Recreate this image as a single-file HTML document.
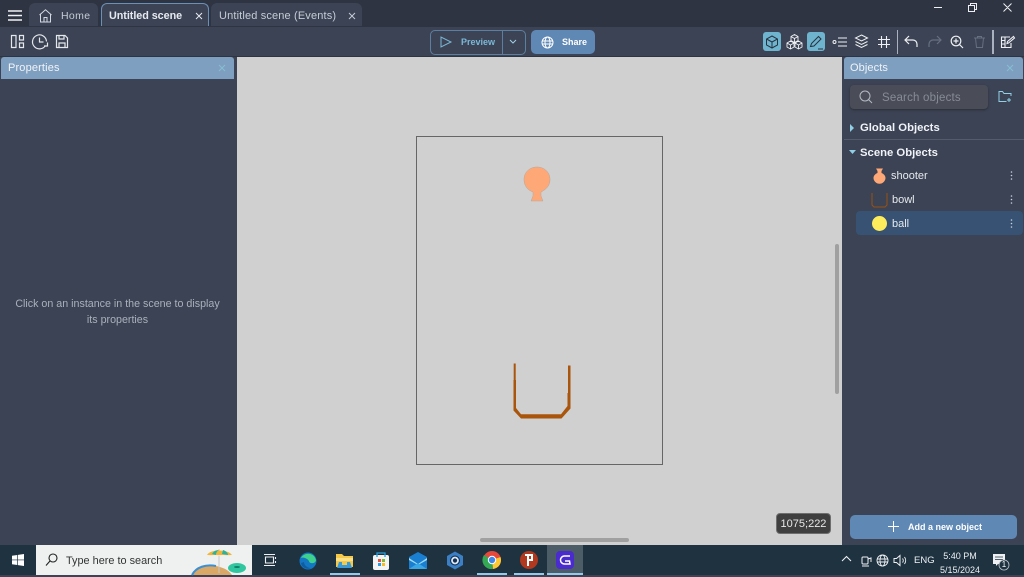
<!DOCTYPE html>
<html><head><meta charset="utf-8"><style>
html,body{margin:0;padding:0}
body{width:1024px;height:575px;overflow:hidden;position:relative;background:#3c4354;font-family:"Liberation Sans",sans-serif;color:#fff}
.a{position:absolute}
.t{position:absolute;white-space:nowrap;line-height:14px}
svg{position:absolute;overflow:visible}
.tab{position:absolute;top:3px;height:23px;background:#3c4354;border-radius:6px 6px 0 0;box-sizing:border-box}
.hd{position:absolute;top:57px;height:22px;background:#7f9fc0;border-radius:3px 3px 0 0}
</style></head><body>
<div class="a" style="left:0;top:0;width:1024px;height:27px;background:#2e3441"></div>
<svg style="left:0;top:0" width="30" height="27" fill="none" stroke="#f0f2f5" stroke-width="1.500"><path d="M8 11h14M8 15.500h14M8 20h14"/></svg>
<div class="tab" style="left:29px;width:69px"></div>
<svg style="left:39px;top:9px" width="14" height="14" fill="none" stroke="#d5dae2" stroke-width="1"><path d="M.5 6L6.500 .8 12.500 6M1.500 5.500V13h10V5.500M5 13V8.500h3V13"/></svg>
<div class="t" style="left:61px;top:9px;font-size:10.500px;color:#c6ccd6;letter-spacing:.35px">Home</div>
<div class="tab" style="left:101px;width:108px;border:1px solid #6b90b8;border-bottom:0"></div>
<div class="t" style="left:109px;top:9px;font-size:10.800px;font-weight:bold;color:#e6eaf0;letter-spacing:-.05px">Untitled scene</div>
<svg style="left:195px;top:12px" width="9" height="9" stroke="#e6eaf0" stroke-width="1"><path d="M1 1l6 6M7 1l-6 6"/></svg>
<div class="tab" style="left:211px;width:151px"></div>
<div class="t" style="left:219px;top:9px;font-size:11px;color:#c6ccd6;letter-spacing:.15px">Untitled scene (Events)</div>
<svg style="left:348px;top:12px" width="9" height="9" stroke="#c6ccd6" stroke-width="1"><path d="M1 1l6 6M7 1l-6 6"/></svg>

<svg style="left:934px;top:0" width="85" height="15" fill="none" stroke="#eef0f3" stroke-width="1"><path d="M0 7.500h8M34.500 5.500h6v6h-6zM36.500 5.500v-2h6v6h-2M69.500 3.500l8 8M77.500 3.500l-8 8"/></svg>

<svg style="left:10px;top:34px" width="60" height="16" fill="none" stroke="#e4e7ec" stroke-width="1.200"><path d="M1.500 1.500h4.500v12H1.500zM9.500 1.500h4v4.500h-4zM9.500 9h4v4.500h-4z"/><path d="M35.500 11.500A7 7 0 1 1 36.500 7.500M29.500 3.500v4.500h4M37.500 8.500v3.500h-3.500"/><path d="M46.500 1.500h8.500l2.500 2.500v9.500h-11zM49 1.500v3.500h5V1.500M49 13.500V9h6v4.500"/></svg>

<div class="a" style="left:430px;top:30px;width:94px;height:22.500px;border:1px solid #5d7f9f;border-radius:5px"></div>
<div class="a" style="left:502px;top:30px;width:1px;height:24px;background:#5d7f9f"></div>
<svg style="left:440px;top:36px" width="13" height="12" fill="none" stroke="#7cb8d8" stroke-width="1"><path d="M1 1v10l10-5z"/></svg>
<div class="t" style="left:461px;top:35px;font-size:9px;font-weight:bold;color:#7cb8d8">Preview</div>
<svg style="left:509px;top:39px" width="9" height="6" fill="none" stroke="#9fd0e6" stroke-width="1"><path d="M1 1l3 3 3-3"/></svg>
<div class="a" style="left:531px;top:30px;width:64px;height:24px;background:#5f88b5;border-radius:5px"></div>
<svg style="left:541px;top:36px" width="13" height="13" fill="none" stroke="#fff" stroke-width="1"><circle cx="6.500" cy="6.500" r="5.500"/><ellipse cx="6.500" cy="6.500" rx="2.500" ry="5.500"/><path d="M1 5h11M1 8h11"/></svg>
<div class="t" style="left:562px;top:35px;font-size:9px;font-weight:bold;color:#fff">Share</div>

<div class="a" style="left:763px;top:32px;width:18px;height:19px;background:#6fb4cf;border-radius:3px"></div>
<svg style="left:765px;top:35px" width="14" height="14" fill="none" stroke="#27323f" stroke-width="1"><path d="M7 1l5.500 3v6L7 13l-5.500-3V4zM1.500 4L7 7l5.500-3M7 7v6"/></svg>
<svg style="left:786px;top:34px" width="17" height="16" fill="none" stroke="#eef0f3" stroke-width=".9"><path d="M8.500 .5l3.500 2v4l-3.500 2-3.500-2v-4zM5 2.500l3.500 2 3.500-2M8.500 4.500v4M4.500 7l3.500 2v4l-3.500 2-3.500-2V9zM1 9l3.500 2L8 9M4.500 11v4M12.500 7L16 9v4l-3.500 2L9 13V9zM9 9l3.500 2L16 9M12.500 11v4"/></svg>
<div class="a" style="left:807px;top:32px;width:18px;height:19px;background:#6fb4cf;border-radius:3px"></div>
<svg style="left:809px;top:35px" width="15" height="15" fill="none" stroke="#27323f" stroke-width="1"><path d="M1.500 11.500l1-3L9.500 1.500l2.500 2.500-7 7zM9 14h5"/></svg>
<svg style="left:832px;top:36px" width="16" height="13" fill="none" stroke="#eef0f3" stroke-width="1"><circle cx="2.500" cy="6" r="1.500"/><path d="M6 2h9M6 6h9M6 10h9"/></svg>
<svg style="left:854px;top:34px" width="15" height="15" fill="none" stroke="#eef0f3" stroke-width="1"><path d="M7.500 1l6 3-6 3-6-3zM1.500 7.500l6 3 6-3M1.500 10.500l6 3 6-3"/></svg>
<svg style="left:877px;top:35px" width="14" height="14" fill="none" stroke="#eef0f3" stroke-width="1.100"><path d="M4.500 1v12M9.500 1v12M1 4.500h12M1 9.500h12"/></svg>
<div class="a" style="left:897px;top:30px;width:1px;height:24px;background:#aab2bf"></div>
<svg style="left:904px;top:35px" width="15" height="13" fill="none" stroke="#eef0f3" stroke-width="1.200"><path d="M5 1L1 5l4 4M1 5h8a4 4 0 0 1 4 4v3"/></svg>
<svg style="left:927px;top:35px" width="15" height="13" fill="none" stroke="#667080" stroke-width="1.200"><path d="M10 1l4 4-4 4M14 5H6a4 4 0 0 0-4 4v3"/></svg>
<svg style="left:950px;top:35px" width="14" height="14" fill="none" stroke="#eef0f3" stroke-width="1.200"><circle cx="6" cy="6" r="4.800"/><path d="M9.500 9.500l3.500 3.500M6 3.500v5M3.500 6h5"/></svg>
<svg style="left:973px;top:35px" width="13" height="14" fill="none" stroke="#667080" stroke-width="1"><path d="M1 3h11M4.500 3V1.500h4V3M2.500 3l1 9.500h6l1-9.500"/></svg>
<div class="a" style="left:992px;top:30px;width:2px;height:24px;background:#aab2bf"></div>
<svg style="left:1000px;top:35px" width="16" height="14" fill="none" stroke="#eef0f3" stroke-width="1.100"><path d="M10 2H1.500v10.500H11V8M5 2v10.500M1.500 5.500H5M1.500 9H5M7 8.500l.5-2 6-5 1 1.500-6 5z"/></svg>

<div class="a" style="left:0;top:56px;width:1024px;height:1px;background:#2e3441"></div>
<div class="hd" style="left:1px;width:233px"></div>
<div class="t" style="left:8px;top:61px;font-size:11px;color:#f0f3f7;letter-spacing:.15px">Properties</div>
<svg style="left:218px;top:64px" width="9" height="9" stroke="#86bed2" stroke-width="1"><path d="M1 1l6 6M7 1l-6 6"/></svg>
<div class="t" style="left:0;top:296px;width:235px;text-align:center;font-size:10.700px;line-height:16px;color:#aab0bb;white-space:normal">Click on an instance in the scene to display<br>its properties</div>

<div class="a" style="left:237px;top:57px;width:605px;height:488px;background:#d0d0d0"></div>
<div class="a" style="left:416px;top:136px;width:247px;height:329px;border:1px solid #666;box-sizing:border-box"></div>
<svg style="left:500px;top:155px" width="80" height="60"><path d="M33 37C27 35 24 30 24 24.500 24 17 30 12 37 12 44 12 50 17 50 24.500 50 30 47 34 41 37V41L43 46H31L33 41Z" fill="#fea878" stroke="#b3a79f" stroke-width=".5"/></svg>
<svg style="left:500px;top:355px" width="80" height="70"><path d="M13.700 8.500H15.700V25H16V53L21 59.300H61L67.500 51V38H68V10.500H70.500V53.500L61.500 63.500H21L13.500 55.500V25H13.700Z" fill="#a9550b"/></svg>
<div class="a" style="left:776px;top:513px;width:55px;height:21px;background:#3f3f3f;border:1px solid #6e6e6e;border-radius:4px;box-sizing:border-box"></div>
<div class="t" style="left:776px;top:517px;width:55px;text-align:center;font-size:11px;color:#e8e8e8">1075;222</div>
<div class="a" style="left:835px;top:244px;width:4px;height:150px;background:#a0a0a0;border-radius:2px"></div>
<div class="a" style="left:480px;top:538px;width:149px;height:4px;background:#a0a0a0;border-radius:2px"></div>

<div class="hd" style="left:844px;width:179px"></div>
<div class="t" style="left:850px;top:61px;font-size:11px;color:#f0f3f7;letter-spacing:.1px">Objects</div>
<svg style="left:1006px;top:64px" width="9" height="9" stroke="#86bed2" stroke-width="1"><path d="M1 1l6 6M7 1l-6 6"/></svg>
<div class="a" style="left:850px;top:85px;width:138px;height:24px;background:#4a4d57;border-radius:4px;box-shadow:0 1px 2px #2a2e38"></div>
<svg style="left:859px;top:90px" width="14" height="14" fill="none" stroke="#b4b9c2" stroke-width="1"><circle cx="6" cy="6" r="5"/><path d="M9.500 9.500l3.500 3.500"/></svg>
<div class="t" style="left:882px;top:91px;font-size:11.500px;color:#868b96;letter-spacing:.2px">Search objects</div>
<svg style="left:998px;top:90px" width="15" height="13" fill="none" stroke="#8fd0e6" stroke-width="1"><path d="M13 6V3.500H6L4.500 1.500H1v10h7.500M11 8v4M9 10h4"/></svg>
<svg style="left:850px;top:124px" width="5" height="8"><path d="M0 0l4 4-4 4z" fill="#8fd0e6"/></svg>
<div class="t" style="left:860px;top:121px;font-size:11.300px;font-weight:bold;color:#f0f3f7">Global Objects</div>
<div class="a" style="left:844px;top:139px;width:180px;height:1px;background:#545b6b"></div>
<svg style="left:849px;top:150px" width="8" height="5"><path d="M0 0h7l-3.500 4z" fill="#8fd0e6"/></svg>
<div class="t" style="left:860px;top:146px;font-size:11.300px;font-weight:bold;color:#f0f3f7">Scene Objects</div>
<svg style="left:873px;top:168px" width="13" height="16"><path d="M3 .5h7L8.500 3 8.500 5C11 6 12.500 8 12.500 10c0 3-2.800 5.800-6 5.800S.5 13 .5 10c0-2 1.500-4 4-5L4.500 3z" fill="#fea878"/></svg>
<div class="t" style="left:891px;top:169px;font-size:11px;color:#e6e9ee">shooter</div>
<svg style="left:871px;top:192px" width="17" height="16" fill="none" stroke="#9a5014" stroke-width="1"><path d="M1 1v12l2 2h11l2-2V1"/></svg>
<div class="t" style="left:892px;top:193px;font-size:11px;color:#e6e9ee">bowl</div>
<div class="a" style="left:856px;top:211px;width:167px;height:24px;background:#375273;border-radius:4px"></div>
<div class="a" style="left:872px;top:216px;width:15px;height:15px;background:#fdec5c;border-radius:50%"></div>
<div class="t" style="left:892px;top:217px;font-size:11px;color:#e6e9ee">ball</div>
<svg style="left:1010px;top:171px" width="3" height="60" fill="#c8d0da"><circle cx="1.500" cy="1" r=".8"/><circle cx="1.500" cy="4.500" r=".8"/><circle cx="1.500" cy="8" r=".8"/><circle cx="1.500" cy="25" r=".8"/><circle cx="1.500" cy="28.500" r=".8"/><circle cx="1.500" cy="32" r=".8"/><circle cx="1.500" cy="49" r=".8"/><circle cx="1.500" cy="52.500" r=".8"/><circle cx="1.500" cy="56" r=".8"/></svg>
<div class="a" style="left:850px;top:515px;width:167px;height:24px;background:#5f88b5;border-radius:5px"></div>
<svg style="left:888px;top:521px" width="11" height="11" stroke="#fff" stroke-width="1"><path d="M5.500 0v11M0 5.500h11"/></svg>
<div class="t" style="left:908px;top:520px;font-size:9px;font-weight:bold;color:#fff">Add a new object</div>

<div class="a" style="left:0;top:545px;width:1024px;height:30px;background:#1e3240"></div>
<svg style="left:12px;top:554px" width="12" height="12" fill="#fff"><path d="M0 1.700L5.300 1v4.600H0zM6 .9L12 0v5.600H6zM0 6.300h5.300v4.700L0 10.300zM6 6.300h6V12l-6-.9z"/></svg>
<div class="a" style="left:36px;top:545px;width:216px;height:30px;background:#eff1f1"></div>
<svg style="left:45px;top:553px" width="13" height="14" fill="none" stroke="#222" stroke-width="1.100"><circle cx="8" cy="5" r="4"/><path d="M5 8l-4 4.500"/></svg>
<div class="t" style="left:66px;top:554px;font-size:10.900px;color:#333">Type here to search</div>
<svg style="left:192px;top:545px" width="60" height="30"><path d="M0 30C4 22 14 19 24 21 34 23 38 27 40 30z" fill="#d9a766"/><path d="M0 30C4 22 14 19 24 21" fill="none" stroke="#3c8fd0" stroke-width="2"/><path d="M27 4v24" stroke="#c8c8c8" stroke-width="1"/><path d="M15 10C18 4 36 4 40 10z" fill="#f2b632"/><path d="M20 9C22 6 24 5 27 5 25 6 24 8 24 10zM31 5C34 6 36 8 36 10L30 9z" fill="#2bb39a"/><path d="M15 10l4 1 4-1 4 1 4-1 4 1 5-1v0H15z" fill="#e8e0f0"/><ellipse cx="45" cy="23" rx="9" ry="5" fill="#2fc6a0"/><ellipse cx="45" cy="22" rx="3" ry="1" fill="#0f7f6a"/></svg>
<svg style="left:263px;top:553px" width="14" height="14" fill="none" stroke="#eef0f3" stroke-width="1.100"><path d="M2.500 4h8v6h-8zM1 1.500h11M1 12.500h11M12.500 4v2M12.500 8v2"/></svg>
<svg style="left:299px;top:552px" width="18" height="18"><circle cx="9" cy="9" r="8.500" fill="#1377c4"/><path d="M2 6C5 0 15 0 17 8 17 12 10 12 10 9 8 6 4 5 2 6z" fill="#3fd08d"/><path d="M5 10c0 3 3 6 7 6-4 2-9 0-10-5z" fill="#0f5da0"/></svg>
<svg style="left:336px;top:553px" width="17" height="15"><path d="M0 1h6l2 2h9v11H0z" fill="#f7c948"/><path d="M0 5h17v3H0z" fill="#fbe08a"/><path d="M3 9h11l2 6H1z" fill="#3a9ad9"/><path d="M6 9h5v3H6z" fill="#f7c948"/></svg>
<div class="a" style="left:330px;top:573px;width:30px;height:2px;background:#93c9ea"></div>
<svg style="left:372px;top:551px" width="18" height="19"><rect x="1" y="4" width="16" height="15" rx="2" fill="#f4f4f4"/><path d="M5 6V2h8v4" fill="none" stroke="#2b9fd9" stroke-width="1.300"/><rect x="6" y="8" width="3" height="3" fill="#e8543a"/><rect x="10" y="8" width="3" height="3" fill="#7fba3c"/><rect x="6" y="12" width="3" height="3" fill="#2d9be0"/><rect x="10" y="12" width="3" height="3" fill="#fbbb1c"/></svg>
<svg style="left:409px;top:552px" width="18" height="17"><path d="M0 5L9 0l9 5v12H0z" fill="#1a7fd0"/><path d="M0 6l9 6 9-6v2l-9 5-9-5z" fill="#9fdcf7"/><path d="M0 17l9-6 9 6z" fill="#39a7e6"/></svg>
<svg style="left:446px;top:551px" width="18" height="19"><path d="M9 .5l8 4.500v9l-8 4.500-8-4.500V5z" fill="#3b7fc4"/><circle cx="9" cy="9.500" r="5" fill="#0f2f55"/><circle cx="9" cy="9.500" r="3" fill="none" stroke="#dfe7ef" stroke-width="1.800"/></svg>
<svg style="left:483px;top:551px" width="18" height="18"><circle cx="9" cy="9" r="9" fill="#e6483c"/><path d="M9 9L17.500 6A9 9 0 0 1 10 18z" fill="#fcc934"/><path d="M9 9L10 18A9 9 0 0 1 1 4z" fill="#34a853"/><circle cx="9" cy="9" r="4.200" fill="#fff"/><circle cx="9" cy="9" r="3.200" fill="#3f87e8"/></svg>
<div class="a" style="left:477px;top:573px;width:30px;height:2px;background:#93c9ea"></div>
<svg style="left:520px;top:551px" width="18" height="18"><circle cx="9" cy="9" r="9" fill="#b0391f"/><path d="M5 3h8v7H9v5H7V5H5zM9 5v3h2V5z" fill="#fff" fill-rule="evenodd"/></svg>
<div class="a" style="left:514px;top:573px;width:30px;height:2px;background:#93c9ea"></div>
<div class="a" style="left:547px;top:545px;width:36px;height:30px;background:#4d5d68"></div>
<div class="a" style="left:556px;top:551px;width:18px;height:18px;background:#4a2bd0;border-radius:4px"></div>
<svg style="left:556px;top:551px" width="18" height="18" fill="none" stroke="#fff" stroke-width="1.500"><path d="M14 5H8a4 4 0 0 0-3.500 4 4 4 0 0 0 4 4H14l-.5-3H9"/></svg>
<div class="a" style="left:547px;top:573px;width:36px;height:2px;background:#93c9ea"></div>

<svg style="left:841px;top:555px" width="11" height="8" fill="none" stroke="#eef0f3" stroke-width="1.100"><path d="M1 6l4.500-4.500L10 6"/></svg>
<svg style="left:860px;top:554px" width="12" height="13" fill="none" stroke="#eef0f3" stroke-width="1"><rect x="2" y="3" width="6" height="7" rx="1"/><path d="M8 5l3-1v4M2 12h7"/></svg>
<svg style="left:876px;top:554px" width="14" height="14" fill="none" stroke="#eef0f3" stroke-width=".9"><circle cx="6.500" cy="6.500" r="5.500"/><ellipse cx="6.500" cy="6.500" rx="2.500" ry="5.500"/><path d="M1 5h11M1 8h11"/></svg>
<svg style="left:893px;top:554px" width="15" height="13" fill="none" stroke="#eef0f3" stroke-width="1"><path d="M1 4.500h2.500L7 1.500v10l-3.500-3H1zM9.500 4.500a3 3 0 0 1 0 4M11.500 3a6 6 0 0 1 0 7"/></svg>
<div class="t" style="left:914px;top:554px;font-size:9.500px;color:#eef0f3">ENG</div>
<div class="t" style="left:934px;top:549px;width:52px;text-align:center;font-size:9px;line-height:14px;color:#eef0f3">5:40 PM<br>5/15/2024</div>
<svg style="left:992px;top:553px" width="18" height="18"><path d="M1 1h12v10H6l-2 2v-2H1z" fill="#eef0f3"/><path d="M3 4h8M3 6.500h8" stroke="#1e3240" stroke-width=".8"/><circle cx="12" cy="12" r="5" fill="#1e3240" stroke="#bfc6cc" stroke-width=".8"/></svg>
<div class="t" style="left:1001px;top:560px;width:6px;text-align:center;font-size:8px;line-height:10px;color:#fff">1</div>
</body></html>
